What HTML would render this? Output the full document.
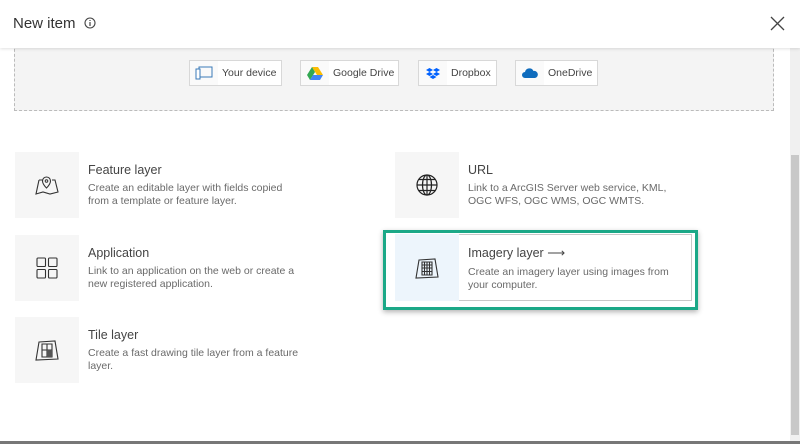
<!DOCTYPE html>
<html><head><style>
*{box-sizing:border-box;margin:0;padding:0}
body{width:800px;height:444px;overflow:hidden;background:#fff;font-family:"Liberation Sans",sans-serif;position:relative;color:#151515}
.hdr{position:absolute;left:0;top:0;width:800px;height:48px;background:#fff;box-shadow:0 1px 3px rgba(0,0,0,.12);z-index:2}
.hdr .t{position:absolute;left:13px;top:15px;font-size:15px;color:#333}
.drop{position:absolute;left:14px;top:44px;width:760px;height:67px;background:#f4f4f4;border:1px dashed #bbb;border-top:none}
.btn{position:absolute;top:60px;height:26px;background:#fff;border:1px solid #d8d8d8;font-size:10.5px;color:#444;display:flex;align-items:center;white-space:nowrap;overflow:hidden}
.btn .i{width:28px;flex:none;height:100%;display:flex;align-items:center;justify-content:center;background:#fafafa}
.btn span{padding-left:4px}
.sb{position:absolute;left:790px;top:48px;width:10px;height:393px;background:#f0f0f0}
.sb .th{position:absolute;left:1px;top:107px;width:8px;height:280px;background:#c8c8c8}
.bot{position:absolute;left:0;top:441px;width:800px;height:3px;background:#777}
.card{position:absolute;height:66px}
.card .ib{position:absolute;left:0;top:0;width:64px;height:100%;background:#f6f6f6;display:flex;align-items:center;justify-content:center}
.card .tt{position:absolute;left:73px;top:11px;font-size:12.5px;color:#444}
.card .d{position:absolute;left:73px;top:30px;font-size:10.5px;color:#6a6a6a;line-height:13px;width:218px}
svg{display:block}
</style></head><body>
<div class="hdr"><div class="t">New item <svg style="display:inline-block;vertical-align:-1px;margin-left:4px" width="12" height="12" viewBox="0 0 12 12"><circle cx="6" cy="6" r="5" fill="none" stroke="#444" stroke-width="1.1"/><path d="M6 5v4M6 3v1" stroke="#444" stroke-width="1.2"/></svg></div>
<svg style="position:absolute;left:770px;top:16px" width="15" height="15" viewBox="0 0 15 15"><path d="M1 1L14 14M14 1L1 14" stroke="#444" stroke-width="1.3"/></svg></div>
<div class="drop"></div>
<div class="btn" style="left:189px;width:93px"><div class="i"><svg width="18" height="14" viewBox="0 0 18 14"><rect x="4" y="1" width="13" height="10" fill="none" stroke="#3a7ab8"/><rect x="1" y="3" width="4" height="10" fill="#fff" stroke="#3a7ab8"/></svg></div><span>Your device</span></div>
<div class="btn" style="left:300px;width:99px"><div class="i"><svg width="16" height="14" viewBox="0 0 16 14"><path d="M5 1h6l5 8h-6z" fill="#fbbc04"/><path d="M5 1L0 9l3 5 5-8z" fill="#34a853"/><path d="M3 14h10l3-5H6z" fill="#4285f4"/></svg></div><span>Google Drive</span></div>
<div class="btn" style="left:418px;width:79px"><div class="i"><svg width="14" height="13" viewBox="0 0 14 13"><path d="M0 3l3.5-2 3.5 2-3.5 2zM7 3l3.5-2 3.5 2-3.5 2zM0 7l3.5-2 3.5 2-3.5 2zM7 7l3.5-2 3.5 2-3.5 2zM3.5 10l3.5-2 3.5 2-3.5 2z" fill="#0061fe"/></svg></div><span>Dropbox</span></div>
<div class="btn" style="left:515px;width:83px"><div class="i"><svg width="16" height="10" viewBox="0 0 16 10"><path d="M3 10a3 3 0 010-6 4.5 4.5 0 018.5-1A3.5 3.5 0 0113 10z" fill="#0f6cbd"/></svg></div><span>OneDrive</span></div>

<div class="card" style="left:15px;top:152px;width:300px"><div class="ib"><svg width="26" height="24" viewBox="0 0 26 24"><path d="M5 7L2 21l7-2 7 2 8-2-3-12h-3M9 7H5" fill="none" stroke="#333" stroke-width="1.1"/><path d="M12.5 15s-4-4-4-7a4 4 0 018 0c0 3-4 7-4 7z" fill="none" stroke="#333" stroke-width="1.1"/><circle cx="12.5" cy="8" r="1.3" fill="none" stroke="#333"/></svg></div><div class="tt">Feature layer</div><div class="d">Create an editable layer with fields copied from a template or feature layer.</div></div>
<div class="card" style="left:15px;top:235px;width:300px"><div class="ib"><svg width="22" height="22" viewBox="0 0 22 22"><g fill="none" stroke="#333" stroke-width="1.1"><rect x="1" y="1" width="8.5" height="8.5" rx="1"/><rect x="12.5" y="1" width="8.5" height="8.5" rx="1"/><rect x="1" y="12.5" width="8.5" height="8.5" rx="1"/><rect x="12.5" y="12.5" width="8.5" height="8.5" rx="1"/></g></svg></div><div class="tt">Application</div><div class="d">Link to an application on the web or create a new registered application.</div></div>
<div class="card" style="left:15px;top:317px;width:300px"><div class="ib"><svg width="24" height="22" viewBox="0 0 24 22"><g fill="none" stroke="#333" stroke-width="1.1"><path d="M4 3l16-1 3 18-22 1z"/><path d="M7 5h10v13H7zM12 5v13M7 11h10"/></g><rect x="12" y="11" width="5" height="7" fill="#555"/></svg></div><div class="tt">Tile layer</div><div class="d">Create a fast drawing tile layer from a feature layer.</div></div>
<div class="card" style="left:395px;top:152px;width:300px"><div class="ib"><svg width="22" height="22" viewBox="0 0 22 22"><g fill="none" stroke="#222" stroke-width="1.2"><circle cx="11" cy="11" r="10"/><ellipse cx="11" cy="11" rx="4.5" ry="10"/><path d="M1 11h20M3 5.5h16M3 16.5h16M11 1v20"/></g></svg></div><div class="tt">URL</div><div class="d">Link to a ArcGIS Server web service, KML, OGC WFS, OGC WMS, OGC WMTS.</div></div>
<div style="position:absolute;left:383px;top:230px;width:315px;height:80px;border:3px solid #1ba887;box-shadow:0 2px 5px rgba(0,0,0,.3)"></div>
<div class="card" style="left:395px;top:234px;width:297px;height:67px;border:1px solid #c8c8c8;background:#fff"><div class="ib" style="background:#edf5fc;left:-1px;top:-1px;height:67px"><svg width="24" height="22" viewBox="0 0 24 22"><g fill="none" stroke="#333" stroke-width="1.1"><path d="M4 3l16-1 3 18-22 1z"/><path d="M7 5h10v13H7zM12 5v13M7 11h10M7 8h10M7 14.5h10M9.5 5v13M14.5 5v13"/></g></svg></div><div class="tt" style="top:10px;left:72px">Imagery layer ⟶</div><div class="d" style="top:31px;left:72px">Create an imagery layer using images from your computer.</div></div>
<div class="sb"><div class="th"></div></div>
<div class="bot"></div>
</body></html>
